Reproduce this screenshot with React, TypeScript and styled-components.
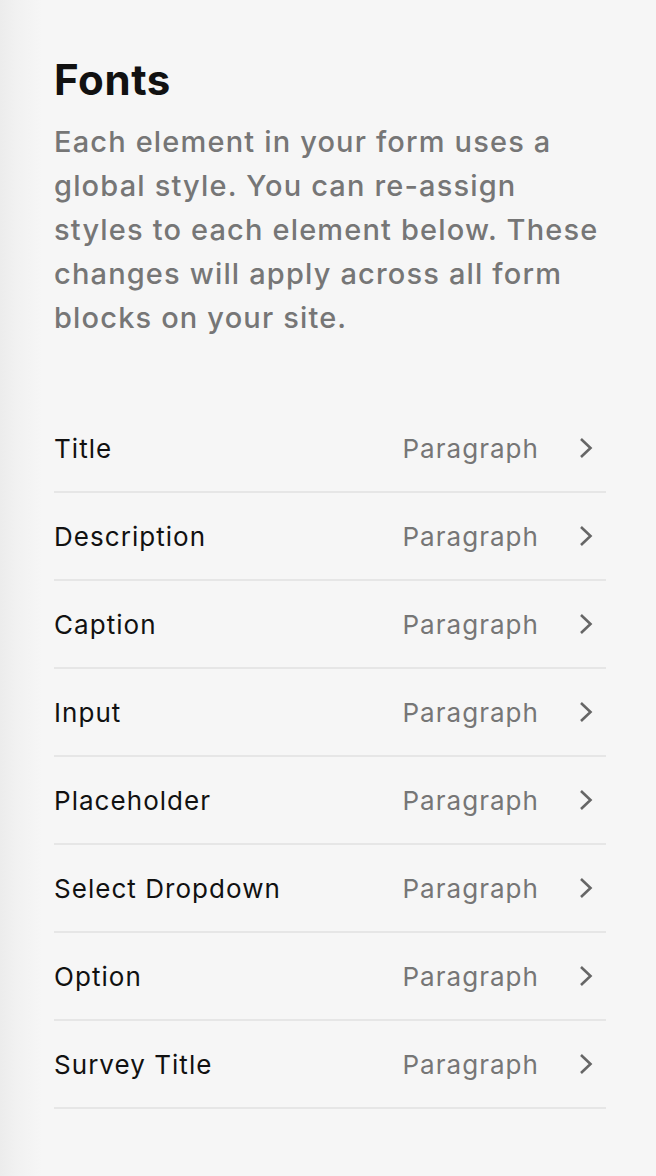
import React from 'react';
import styled, { createGlobalStyle } from 'styled-components';

const GlobalStyle = createGlobalStyle`
  html, body {
    margin: 0;
    padding: 0;
    background: #f6f6f6;
  }
  body {
    font-family: Inter, "Noto Sans", "Liberation Sans", sans-serif;
    -webkit-font-smoothing: antialiased;
  }
`;

const Panel = styled.div`
  min-height: 1176px;
  box-sizing: border-box;
  padding: 56px 50px 40px 54px;
  background: linear-gradient(to right, #ececec 0px, #f1f1f1 16px, #f6f6f6 42px);
`;

const Heading = styled.h1`
  margin: 0;
  font-size: 42px;
  line-height: 48px;
  font-weight: 700;
  color: #111;
  letter-spacing: 0.6px;
`;

const Intro = styled.p`
  margin: 16px -6px 0 0;
  font-size: 29px;
  line-height: 44px;
  font-weight: 500;
  color: #767676;
  letter-spacing: 0.04em;
`;

const List = styled.ul`
  list-style: none;
  margin: 65px 0 0;
  padding: 0;
`;

const Row = styled.li`
  display: flex;
  align-items: center;
  height: 86px;
  border-bottom: 2px solid #e6e6e6;
  cursor: pointer;
`;

const Label = styled.span`
  flex: 1;
  font-size: 26px;
  color: #111;
  letter-spacing: 0.04em;
`;

const Value = styled.span`
  font-size: 26px;
  color: #767676;
  letter-spacing: 0.04em;
  margin-right: 39px;
`;

const Chevron = styled.svg`
  width: 16px;
  height: 22px;
  margin-right: 12px;
  color: #666;
`;

const items = [
  'Title',
  'Description',
  'Caption',
  'Input',
  'Placeholder',
  'Select Dropdown',
  'Option',
  'Survey Title',
];

export default function App() {
  return (
    <>
      <GlobalStyle />
      <Panel>
        <Heading>Fonts</Heading>
        <Intro>
          Each element in your form uses a global style. You can re-assign styles to each element
          below. These changes will apply across all form blocks on your site.
        </Intro>
        <List>
          {items.map((name) => (
            <Row key={name}>
              <Label>{name}</Label>
              <Value>Paragraph</Value>
              <Chevron viewBox="0 0 16 22" fill="none">
                <path d="M3 2 L12.5 11 L3 20" stroke="currentColor" strokeWidth="2.6" />
              </Chevron>
            </Row>
          ))}
        </List>
      </Panel>
    </>
  );
}
